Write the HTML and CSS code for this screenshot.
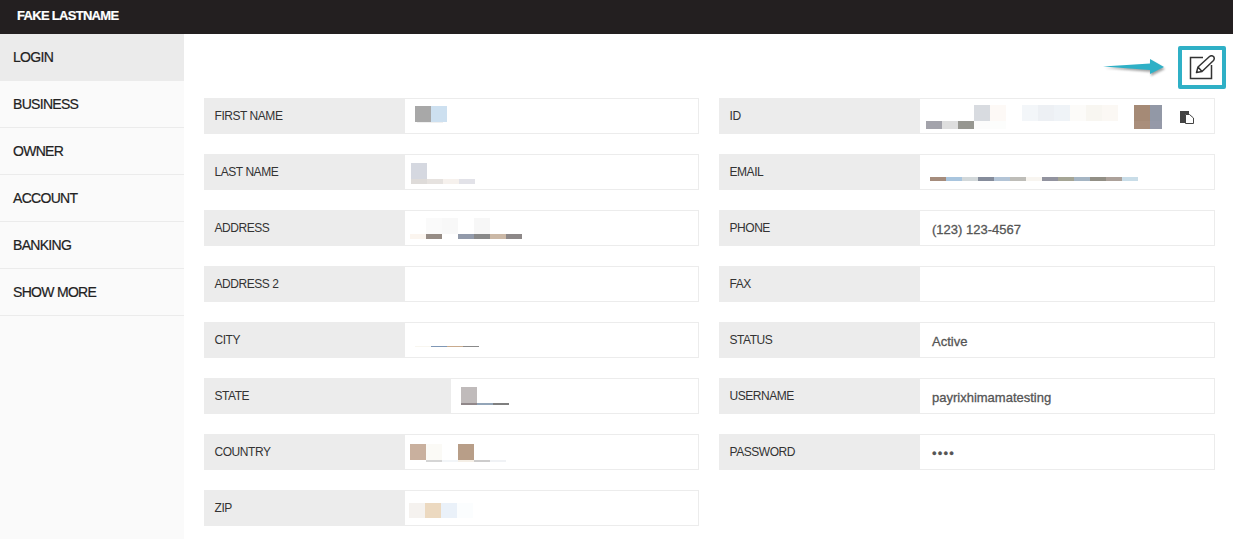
FILE: index.html
```html
<!DOCTYPE html>
<html lang="en">
<head>
<meta charset="utf-8">
<title>Fake Lastname</title>
<link rel="stylesheet" href="styles.css">
</head>
<body>
<header class="topbar">FAKE LASTNAME</header>
<div class="page">
  <nav class="sidebar">
    <a class="nav-item active">LOGIN</a>
    <a class="nav-item">BUSINESS</a>
    <a class="nav-item">OWNER</a>
    <a class="nav-item">ACCOUNT</a>
    <a class="nav-item">BANKING</a>
    <a class="nav-item">SHOW MORE</a>
  </nav>
  <main class="content">
    <div class="toolbar">
      <svg class="arrow" width="64" height="20" viewBox="0 0 64 20">
        <path class="arrow-shadow" d="M2 10 L48 8 L48 3 L62 11 L48 18 L48 14 Z"/>
        <path class="arrow-fill" d="M0 8.500 L47 5.500 L47 1 L61 9 L47 16 L47 12 Z"/>
      </svg>
      <button class="edit-btn" type="button" aria-label="Edit">
        <svg width="26" height="26" viewBox="0 0 26 26">
          <path class="edit-square" d="M14 2.500 H1.500 V23.500 H22.500 V10"/>
          <path class="edit-pen" d="M7.500 17.500 L9 12 L20.500 1.500 Q22.500 0 24.500 1.500 Q26 3.500 24.500 5.500 L13 16.500 Z M9 12 L13 16.500"/>
        </svg>
      </button>
    </div>
    <div class="fields">
      <div class="col">
        <div class="row"><div class="label">FIRST NAME</div><div class="value">
          <svg class="mosaic"><rect x="10" y="7" width="16" height="16" fill="#a8a8a8"/><rect x="26" y="7" width="16" height="16" fill="#cde0f0"/><rect x="12" y="23" width="26" height="1" fill="#f0f0f0"/></svg>
        </div></div>
        <div class="row"><div class="label">LAST NAME</div><div class="value">
          <svg class="mosaic"><rect x="6" y="8" width="16" height="16" fill="#d5d8e0"/><rect x="6" y="24" width="16" height="5" fill="#dedbd9"/><rect x="22" y="24" width="16" height="5" fill="#e6e2df"/><rect x="38" y="24" width="16" height="5" fill="#f6f1ed"/><rect x="54" y="24" width="16" height="5" fill="#e2e2e8"/></svg>
        </div></div>
        <div class="row"><div class="label">ADDRESS</div><div class="value">
          <svg class="mosaic"><rect x="21" y="7" width="16" height="16" fill="#fafafa"/><rect x="37" y="7" width="16" height="16" fill="#f8f8f8"/><rect x="69" y="7" width="16" height="16" fill="#f7f7f7"/><rect x="5" y="23" width="16" height="5" fill="#fbf5ef"/><rect x="21" y="23" width="16" height="5" fill="#968c85"/><rect x="53" y="23" width="16" height="5" fill="#929aaa"/><rect x="69" y="23" width="16" height="5" fill="#898989"/><rect x="85" y="23" width="16" height="5" fill="#cbb8a6"/><rect x="101" y="23" width="16" height="5" fill="#8d8888"/></svg>
        </div></div>
        <div class="row"><div class="label">ADDRESS 2</div><div class="value"></div></div>
        <div class="row"><div class="label">CITY</div><div class="value">
          <svg class="mosaic"><rect x="10" y="23" width="16" height="1" fill="#f8f6f0"/><rect x="26" y="23" width="16" height="1" fill="#7f97b5"/><rect x="42" y="23" width="16" height="1" fill="#c9ab8e"/><rect x="58" y="23" width="16" height="1" fill="#8a8a8a"/></svg>
        </div></div>
        <div class="row"><div class="label wide">STATE</div><div class="value">
          <svg class="mosaic"><rect x="10" y="8" width="16" height="16" fill="#c0bbbb"/><rect x="10" y="24" width="16" height="2" fill="#908789"/><rect x="26" y="24" width="16" height="2" fill="#93a5b8"/><rect x="42" y="24" width="16" height="2" fill="#7f7f7f"/></svg>
        </div></div>
        <div class="row"><div class="label">COUNTRY</div><div class="value">
          <svg class="mosaic"><rect x="5" y="9" width="16" height="16" fill="#c9b09e"/><rect x="21" y="9" width="16" height="16" fill="#fbfaf6"/><rect x="53" y="9" width="16" height="16" fill="#b89e88"/><rect x="21" y="25" width="16" height="2" fill="#d5d5d5"/><rect x="37" y="25" width="16" height="2" fill="#f2f5f8"/><rect x="53" y="25" width="16" height="2" fill="#f5efe6"/><rect x="69" y="25" width="16" height="2" fill="#cdcccc"/><rect x="85" y="25" width="16" height="2" fill="#f0f2f5"/></svg>
        </div></div>
        <div class="row"><div class="label">ZIP</div><div class="value">
          <svg class="mosaic"><rect x="4" y="12" width="16" height="15" fill="#f5f2ef"/><rect x="20" y="12" width="16" height="15" fill="#ecd9c0"/><rect x="36" y="12" width="16" height="15" fill="#eaf1f9"/><rect x="52" y="12" width="16" height="15" fill="#fbfdfe"/></svg>
        </div></div>
      </div>
      <div class="col">
        <div class="row"><div class="label">ID</div><div class="value">
          <svg class="mosaic"><rect x="54" y="6" width="16" height="16" fill="#d8dbe0"/><rect x="70" y="6" width="16" height="16" fill="#fdf9f6"/><rect x="102" y="6" width="16" height="16" fill="#f3f6f9"/><rect x="118" y="6" width="16" height="16" fill="#edf0f4"/><rect x="134" y="6" width="16" height="16" fill="#eff3f7"/><rect x="150" y="6" width="16" height="16" fill="#fcfbf9"/><rect x="166" y="6" width="16" height="16" fill="#f8f6f1"/><rect x="182" y="6" width="16" height="16" fill="#fbf8f4"/><rect x="6" y="22" width="16" height="8" fill="#a3a3ab"/><rect x="22" y="22" width="16" height="8" fill="#dedede"/><rect x="38" y="22" width="16" height="8" fill="#979791"/><rect x="54" y="22" width="16" height="8" fill="#fcfcfc"/><rect x="70" y="22" width="16" height="8" fill="#fcfdfc"/><rect x="214" y="6" width="16" height="16" fill="#a58a76"/><rect x="230" y="6" width="12" height="16" fill="#9298a6"/><rect x="214" y="22" width="16" height="8" fill="#a98e7b"/><rect x="230" y="22" width="12" height="8" fill="#9599a8"/></svg>
          <svg class="copy-icon" width="14" height="14" viewBox="0 0 14 14"><path class="copy-back" d="M0 1 H9 V4 H5.500 V13 H0 Z"/><path class="copy-front" d="M5.500 4.500 H9.500 L13.500 8 V13.500 H5.500 Z"/></svg>
        </div></div>
        <div class="row"><div class="label">EMAIL</div><div class="value">
          <svg class="mosaic"><rect x="10" y="22" width="16" height="4" fill="#a58c7c"/><rect x="26" y="22" width="16" height="4" fill="#a9c5de"/><rect x="42" y="22" width="16" height="4" fill="#d2d8da"/><rect x="58" y="22" width="16" height="4" fill="#858c9b"/><rect x="74" y="22" width="16" height="4" fill="#b3c4d6"/><rect x="90" y="22" width="16" height="4" fill="#bebdb8"/><rect x="106" y="22" width="16" height="4" fill="#f8f5f0"/><rect x="122" y="22" width="16" height="4" fill="#92939f"/><rect x="138" y="22" width="16" height="4" fill="#a5a595"/><rect x="154" y="22" width="16" height="4" fill="#a5b5c3"/><rect x="170" y="22" width="16" height="4" fill="#928f85"/><rect x="186" y="22" width="16" height="4" fill="#aca19a"/><rect x="202" y="22" width="16" height="4" fill="#c9dde8"/></svg>
        </div></div>
        <div class="row"><div class="label">PHONE</div><div class="value"><span class="text">(123) 123-4567</span></div></div>
        <div class="row"><div class="label">FAX</div><div class="value"></div></div>
        <div class="row"><div class="label">STATUS</div><div class="value"><span class="text">Active</span></div></div>
        <div class="row"><div class="label">USERNAME</div><div class="value"><span class="text">payrixhimamatesting</span></div></div>
        <div class="row"><div class="label">PASSWORD</div><div class="value"><span class="text secret">••••</span></div></div>
      </div>
    </div>
  </main>
</div>
</body>
</html>
```
FILE: styles.css
```css
* { box-sizing: border-box; }
html, body { margin: 0; height: 100%; overflow: hidden; }
body {
  font-family: "Liberation Sans", Arial, sans-serif;
  color: #222;
  background: #fff;
  display: flex;
  flex-direction: column;
}
.topbar {
  height: 34px;
  flex: none;
  background: #231f20;
  color: #fff;
  font-size: 13px;
  font-weight: bold;
  line-height: 32px;
  padding-left: 17px;
  letter-spacing: -0.7px;
  -webkit-text-stroke: 0.2px #fff;
}
.page { flex: 1; display: flex; min-height: 0; }
.sidebar { width: 184px; flex: none; background: #fafafa; }
.nav-item {
  display: block;
  height: 47px;
  line-height: 46px;
  padding-left: 13px;
  font-size: 14px;
  letter-spacing: -0.7px;
  color: #222;
  border-bottom: 1px solid #ebebeb;
  -webkit-text-stroke: 0.2px #222;
}
.nav-item.active { background: #ebebeb; }
.content { flex: 1; padding: 0 18px 0 20px; min-width: 0; }
.toolbar {
  height: 64px;
  display: flex;
  justify-content: flex-end;
  align-items: flex-start;
  margin-right: -11px;
  padding-top: 12px;
}
.arrow { margin: 12px 11px 0 0; }
.arrow-fill { fill: #2fb0c6; }
.arrow-shadow { fill: #666; opacity: 0.6; filter: blur(1px); }
.edit-btn {
  width: 48px;
  height: 43px;
  padding: 0;
  border: 4px solid #2fb0c6;
  border-radius: 2px;
  background: #fff;
  display: flex;
  align-items: center;
  justify-content: center;
}
.edit-square { fill: none; stroke: #333; stroke-width: 1.500; }
.edit-pen { fill: #fff; stroke: #333; stroke-width: 1.500; stroke-linejoin: round; }
.fields { display: grid; grid-template-columns: 495px 496px; column-gap: 20px; }
.col { display: flex; flex-direction: column; gap: 20px; }
.row { display: flex; height: 36px; border: 1px solid #ececec; }
.label {
  width: 200px;
  flex: none;
  background: #ececec;
  padding-left: 9.5px;
  font-size: 12px;
  line-height: 34px;
  letter-spacing: -0.45px;
  color: #333;
}
.label.wide { width: 246px; }
.value { flex: 1; position: relative; display: flex; align-items: center; padding: 2px 0 0 12px; }
.text { font-size: 13px; color: #555; -webkit-text-stroke: 0.3px #555; }
.secret { letter-spacing: 1.2px; }
.mosaic { position: absolute; left: 0; top: 0; width: 100%; height: 100%; shape-rendering: crispEdges; }
.copy-icon { position: absolute; left: 260px; top: 11px; }
.copy-back { fill: #444; }
.copy-front { fill: #fff; stroke: #444; stroke-width: 1; }
```
